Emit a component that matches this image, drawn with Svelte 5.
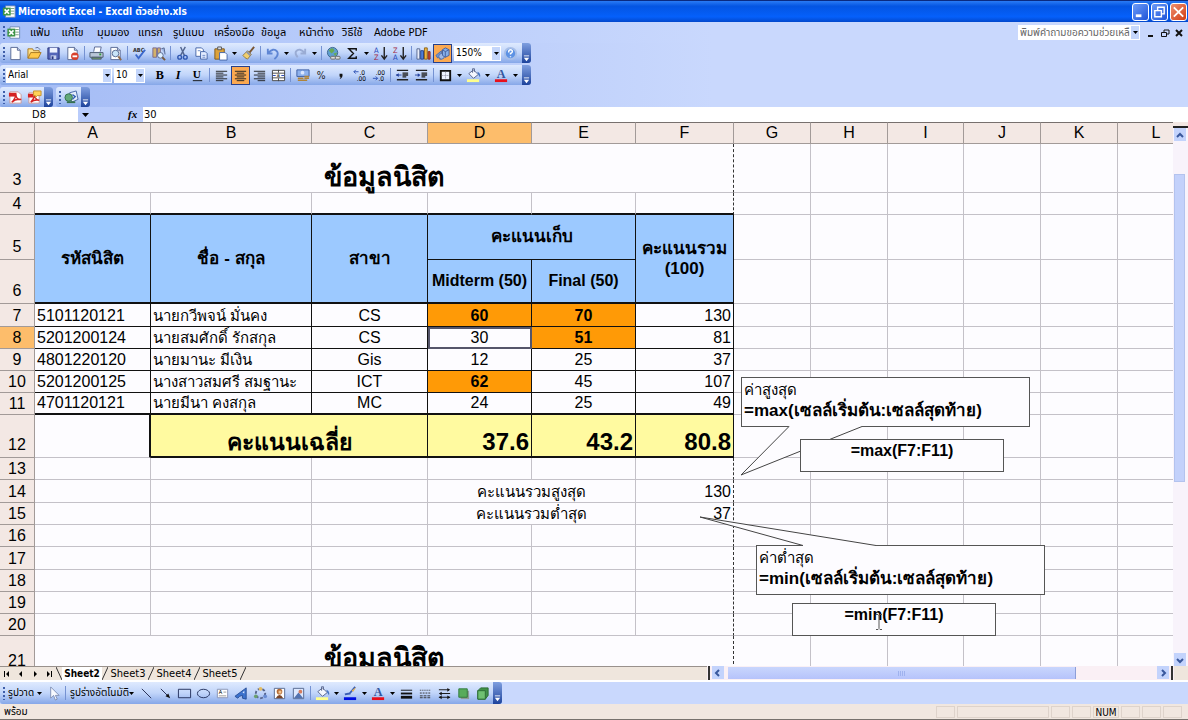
<script>
	let zoom = '150%';
	let font = 'Arial';
	let size = '10';
	let formula = '30';
	let question = '';
	let active = 'Sheet2';

	const menus = [
		['แฟ้ม', 18], ['แก้ไข', 23], ['มุมมอง', 28], ['แทรก', 22], ['รูปแบบ', 28],
		['เครื่องมือ', 34], ['ข้อมูล', 25], ['หน้าต่าง', 30], ['วิธีใช้', 19], ['Adobe PDF', 46]
	];
	const sheets = ['Sheet2', 'Sheet3', 'Sheet4', 'Sheet5'];

	// '|' is a separator, 'v' a drop arrow, everything else an icon name
	const standard1 = ['new', 'open', 'save', 'perm', '|', 'print', 'preview', '|', 'spell', 'research', '|', 'cut', 'copy', 'paste', 'v', 'brush', '|', 'undo', 'v', 'redo', 'v', '|', 'link', 'sum', 'v', 'az', 'za', '|', 'chart', 'drawing'];
	const format = ['bold', 'italic', 'underline', '|', 'left', 'center', 'right', 'merge', '|', 'money', 'percent', 'comma', 'incdec', 'decdec', '|', 'outdent', 'indent', '|', 'border', 'v', 'fill', 'v', 'fontcolor', 'v'];
	const draw = ['line', 'arrow', 'rect', 'oval', 'textbox', 'wordart', 'diagram', 'clip', 'picture', '|', 'fill', 'v', 'linecolor', 'v', 'fontcolor', 'v', 'weights', 'dashes', 'arrows', 'shadow', 'cube'];
	const pressed = ['drawing', 'center'];

	const page = '<path d="M3 1.5h7l3 3v10H3z" fill="#fff" stroke="#5a6a94"/><path d="M10 1.5v3h3" fill="#cfdcf5" stroke="#5a6a94"/>';
	const bucket = '<path d="M3 7l5-4 5 5-5 4z" fill="#f4f7ff" stroke="#56648c"/><path d="M7 6V2q1-2 2 0v3" fill="none" stroke="#56648c"/><path d="M12 5q4 1 3 6l-2-3z" fill="#4474c4"/>';
	const icons = {
		new: page,
		open: '<path d="M1 13V3h5l1 2h6v3" fill="#ffe08a" stroke="#a87820"/><path d="M1 13l3-6h11l-3 6z" fill="#ffc84a" stroke="#a87820"/><path d="M9 2q3-2 5 2" fill="none" stroke="#5a6a94"/>',
		save: '<path d="M2 2h12v12H2z" fill="#5566b8" stroke="#27357e"/><path d="M4 2h8v5H4z" fill="#eef2ff"/><path d="M5 10h6v4H5z" fill="#c9d2ee"/><path d="M6 11h2v3H6z" fill="#27357e"/>',
		perm: page + '<circle cx="10.500" cy="11" r="4" fill="#d8402c"/><path d="M8 11h5" stroke="#fff" stroke-width="2"/>',
		print: '<path d="M5 6l1-5h7l-1 5" fill="#fff" stroke="#5a6a94"/><path d="M1 7h14v5H1z" fill="#b9c6d8" stroke="#4c5c70"/><path d="M3 12h10v2H3z" fill="#6e9a62" stroke="#4c5c70"/><path d="M11 9h2" stroke="#2f9a38" stroke-width="2"/>',
		preview: page + '<circle cx="8" cy="8" r="3.500" fill="#c8e4f8" stroke="#55688f"/><path d="M11 11l3 4" stroke="#8f6a4b" stroke-width="2"/>',
		spell: '<text x="1" y="6" font-size="6" font-weight="bold" fill="#333">ABC</text><path d="M4 9l3 4 7-9" fill="none" stroke="#3b68cc" stroke-width="2"/>',
		research: '<path d="M2 2h4v10H2zM7 2h3v8H7z" fill="#d4b26a" stroke="#7b6a8c"/><path d="M11 3l3-1 1 7" fill="#9db4e4" stroke="#55688f"/><circle cx="10" cy="10" r="3" fill="#dff0ff" stroke="#55688f"/><path d="M12 12l3 3" stroke="#7a5a3b" stroke-width="2"/>',
		cut: '<path d="M6 1l4 9M11 1L6 10" stroke="#52658f" stroke-width="1.500"/><circle cx="5" cy="12" r="2" fill="none" stroke="#2f57b0" stroke-width="1.500"/><circle cx="11" cy="12" r="2" fill="none" stroke="#2f57b0" stroke-width="1.500"/>',
		copy: '<path d="M2 2h6l2 2v7H2z" fill="#fff" stroke="#4565a8"/><path d="M7 6h5l2 2v6H7z" fill="#e3ecff" stroke="#4565a8"/><path d="M4 5h3M9 10h3M9 12h3" stroke="#6f8cc8"/>',
		paste: '<path d="M2 3h10v11H2z" fill="#dda23a" stroke="#7d5a1d"/><path d="M5 1h4v3H5z" fill="#d7dbe4" stroke="#555"/><path d="M7 7h6l2 2v6H7z" fill="#fff" stroke="#4565a8"/>',
		brush: '<path d="M14 1L9 7" stroke="#7a5530" stroke-width="2"/><path d="M7 5l4 4-4 5q-3-1-5-4z" fill="#f2cf6b" stroke="#8c7a50"/><path d="M6 6l4 4" stroke="#8c93a8" stroke-width="2"/>',
		undo: '<path d="M3 3v5h5M3 8q6-7 10-2 2 4-3 8" fill="none" stroke="#5f86d4" stroke-width="2"/>',
		redo: '<path d="M13 3v5H8M13 8Q7 1 3 6q-1 3 2 6" fill="none" stroke="#9aacd4" stroke-width="2"/>',
		link: '<circle cx="7" cy="7" r="5.500" fill="#5f9fd0" stroke="#3b6590"/><path d="M3 5q4-5 6 0l-3 3zM8 8l4-1-2 4z" fill="#67aa55"/><rect x="5" y="11" width="5" height="3" rx="1" fill="#ddd" stroke="#666"/><rect x="10" y="11" width="5" height="3" rx="1" fill="#ddd" stroke="#666"/>',
		sum: '<path d="M12 5V3H4l5 5-5 5h8v-2" fill="none" stroke="#111" stroke-width="1.500"/>',
		az: '<text x="1" y="7" font-size="8" fill="#2545b8">A</text><text x="1" y="15" font-size="8" fill="#a32942">Z</text><path d="M12 1v12M9 10l3 4 3-4" fill="none" stroke="#222" stroke-width="1.500"/>',
		za: '<text x="1" y="7" font-size="8" fill="#a32942">Z</text><text x="1" y="15" font-size="8" fill="#2545b8">A</text><path d="M12 1v12M9 10l3 4 3-4" fill="none" stroke="#222" stroke-width="1.500"/>',
		chart: '<path d="M1 3h3v11H1z" fill="#e9eefb" stroke="#55688f"/><path d="M5 5h3v9H5z" fill="#4d7fd8" stroke="#27458a"/><path d="M9 2h3v12H9z" fill="#f0b43c" stroke="#8d6419"/><path d="M13 6h2v8h-2z" fill="#d84d32" stroke="#8c2c1c"/>',
		drawing: '<path d="M1 10l6-5v9H5v-2H3v1z" fill="#6f94d8" stroke="#5470a8"/><circle cx="7" cy="11" r="3" fill="#9fb8e6" stroke="#5470a8"/><path d="M8 4l3-2 4 2v6l-4 2-3-2z" fill="#86aee8" stroke="#4461a0"/><path d="M8 4l3 2 4-2M11 6v6" stroke="#4461a0" fill="none"/>',
		help: '<circle cx="8" cy="8" r="6" fill="#5d92e4" stroke="#a8bfe8" stroke-width="2"/><path d="M6 7q0-3 2-3t2 2q0 1-2 2v1M8 11v1" fill="none" stroke="#fff" stroke-width="1.500"/>',
		bold: '<text x="4" y="12" font-family="Liberation Serif" font-size="13" font-weight="bold">B</text>',
		italic: '<text x="5" y="12" font-family="Liberation Serif" font-size="13" font-weight="bold" font-style="italic">I</text>',
		underline: '<text x="3" y="11" font-family="Liberation Serif" font-size="12" font-weight="bold">U</text><path d="M3 13.500h10" stroke="#111"/>',
		left: '<path d="M2 3.500h12M2 5.500h8M2 7.500h12M2 9.500h8M2 11.500h12M2 13.500h8" stroke="#222"/>',
		center: '<path d="M2 3.500h12M4 5.500h8M2 7.500h12M4 9.500h8M2 11.500h12M4 13.500h8" stroke="#222"/>',
		right: '<path d="M2 3.500h12M6 5.500h8M2 7.500h12M6 9.500h8M2 11.500h12M6 13.500h8" stroke="#222"/>',
		merge: '<path d="M1.500 2.500h13v11h-13z" fill="#fff" stroke="#444"/><path d="M1 5.500h14M1 10.500h14M8 2v3M8 11v3" stroke="#444"/><path d="M2 8h3M11 8h3" stroke="#2545b8"/><text x="6" y="10" font-size="6">a</text>',
		money: '<path d="M2 2h13v7H2z" fill="#8eb2ee" stroke="#3d5fa5"/><circle cx="8" cy="5" r="2" fill="#dbe7ff"/><path d="M3 11h6M3 13h6M10 9h5M10 11h5M9 13h4" stroke="#b0843a" stroke-width="1.500"/>',
		percent: '<text x="3" y="12" font-size="11" fill="#222">%</text>',
		comma: '<path d="M7 6h3q1 4-3 6 2-3 0-3z" fill="#111"/>',
		incdec: '<text x="8" y="7" font-size="7">.0</text><text x="5" y="14" font-size="7">.00</text><path d="M2 4h5M4 2L2 4l2 2" fill="none" stroke="#2c50b4"/>',
		decdec: '<text x="5" y="7" font-size="7">.00</text><text x="8" y="14" font-size="7">.0</text><path d="M2 11h5M5 9l2 2-2 2" fill="none" stroke="#2c50b4"/>',
		outdent: '<path d="M2 2.500h12M8 5.500h6M8 7.500h6M8 9.500h4M2 12.500h12" stroke="#222" stroke-width="1.500"/><path d="M1 7.500h6" stroke="#23409c"/><path d="M1 7.500l3-2v4z" fill="#23409c"/>',
		indent: '<path d="M2 2.500h12M8 5.500h6M8 7.500h6M8 9.500h4M2 12.500h12" stroke="#222" stroke-width="1.500"/><path d="M1 7.500h4" stroke="#23409c"/><path d="M7 7.500l-3-2v4z" fill="#23409c"/>',
		border: '<path d="M3 3h10v10H3z" fill="#eef3ff" stroke="#111" stroke-width="2"/><path d="M8 4v8M4 8h8" stroke="#889" stroke-dasharray="1 1"/>',
		fill: '<g transform="translate(0 -1)">' + bucket + '</g><path d="M1 12h13v3H1z" fill="#ffff8c"/>',
		linecolor: '<path d="M13 1L7 8M2 9q4-1 6-1" fill="none" stroke="#3a5eb4" stroke-width="2"/><path d="M14 1L9 5l2 1z" fill="#eab24d"/><path d="M1 12h13v3H1z" fill="#0010e0"/>',
		fontcolor: '<text x="3" y="11" font-family="Liberation Serif" font-size="13" font-weight="bold" fill="#3356a0">A</text><path d="M1 12h13v3H1z" fill="#e8101c"/>',
		pdf: '<path d="M2 2h9l3 3v9H2z" fill="#fff" stroke="#c99"/><path d="M1 3h8v4H1z" fill="#d52222"/><path d="M4 13q5-5 4-9 1 7 6 6-6-1-10 3" fill="none" stroke="#d52222" stroke-width="1.500"/>',
		pdfmail: '<path d="M2 3h9l2 3v8H2z" fill="#fff" stroke="#c99"/><path d="M1 4h6v4H1z" fill="#d52222"/><path d="M4 13q4-4 4-8 1 6 5 6-5-1-9 2" fill="none" stroke="#d52222" stroke-width="1.500"/><path d="M7 1h8v5h-4l-2 2V6H7z" fill="#ffd257" stroke="#c8912c"/>',
		review: '<path d="M6 3l7-2 2 9-7 3z" fill="#e6eefc" stroke="#4668a8"/><circle cx="5" cy="8" r="4" fill="#62a97a" stroke="#34704f"/><path d="M3 13h9" stroke="#34704f" stroke-width="2"/><path d="M9 5l3 2-3 3" fill="none" stroke="#3462b4" stroke-width="1.500"/>',
		select: '<path d="M5 1v12l3-3 2 5 2-1-2-4h4z" fill="#f8faff" stroke="#7f8fb4"/>',
		line: '<path d="M3 3l10 10" stroke="#222a50"/>',
		arrow: '<path d="M3 3l7 7" stroke="#222a50"/><path d="M13 13l-5-2 3-3z" fill="#111"/>',
		rect: '<path d="M1.500 3.500h13v9h-13z" fill="none" stroke="#22305c"/>',
		oval: '<ellipse cx="8" cy="8" rx="6.500" ry="4.500" fill="none" stroke="#22305c"/>',
		textbox: '<path d="M2.500 3.500h11v9h-11z" fill="#fff" stroke="#8893b4"/><text x="4" y="9" font-size="6">A</text><path d="M9 6.500h3M4 10.500h8" stroke="#999"/>',
		wordart: '<path d="M1 11L13 2v12l-4-1v-3l-3 1-2 2z" fill="#3b72ce" stroke="#2a5098"/><path d="M9 7l2-2v3z" fill="#dce8ff"/>',
		diagram: '<circle cx="8" cy="8" r="5" fill="none" stroke="#56648c" stroke-width="2" stroke-dasharray="3 2"/><circle cx="8" cy="3" r="2" fill="#e4bd62"/><circle cx="3" cy="11" r="2" fill="#6ba06e"/><circle cx="13" cy="11" r="2" fill="#6a8dd4"/>',
		clip: '<path d="M2.500 2.500h11v11h-11z" fill="#fff" stroke="#55688f"/><circle cx="8" cy="6" r="3" fill="#b46a35"/><path d="M4 13q4-7 8 0z" fill="#7a4528"/><path d="M7 5h3v3H7z" fill="#f1c490"/>',
		picture: '<path d="M2.500 2.500h11v11h-11z" fill="#dce8ff" stroke="#55688f"/><path d="M3 13l5-6 5 6z" fill="#5373b0"/><circle cx="10" cy="6" r="2" fill="#d67b5c"/>',
		weights: '<path d="M2 4.500h12" stroke="#111"/><path d="M2 8h12" stroke="#111" stroke-width="2"/><path d="M2 12h12" stroke="#111" stroke-width="3"/>',
		dashes: '<path d="M2 4.500h12" stroke="#333" stroke-dasharray="1 1"/><path d="M2 7.500h12" stroke="#333" stroke-dasharray="2 1"/><path d="M2 10.500h12M2 12.500h12" stroke="#333" stroke-dasharray="3 1"/>',
		arrows: '<path d="M2 4h10M4 8h10M2 12h12" stroke="#111"/><path d="M11 2l3 2-3 2zM5 6L2 8l3 2zM11 10l3 2-3 2zM5 10l-3 2 3 2z" fill="#111"/>',
		shadow: '<path d="M5 5h9v9H5z" fill="#8e9a94"/><path d="M3 3h9v9H3z" fill="#58ab5b" stroke="#2f7a3b"/>',
		cube: '<path d="M3 5l3-3h8v8l-3 4H3z" fill="#3f9048" stroke="#2c6c35"/><path d="M3 5h8v9H3z" fill="#6fc072" stroke="#2c6c35"/>'
	};

	const cols = [
		['A', 116], ['B', 161], ['C', 116], ['D', 104], ['E', 104], ['F', 98], ['G', 77],
		['H', 77], ['I', 76], ['J', 77], ['K', 77], ['L', 77]
	];
	const blanks = (n, c = '') => Array.from({ length: n }, () => ({ c }));

	function student(n, h, id, name, dept, mid, fin, total, hot = [], extra = '') {
		return {
			n, h,
			cells: [
				{ t: id, c: 'k ' + extra }, { t: name, c: 'k thai ' + extra }, { t: dept, c: 'k mid ' + extra },
				{ t: mid, c: 'k mid ' + (hot[0] ? 'hot ' : '') + (n === 8 ? 'cursor ' : '') + extra },
				{ t: fin, c: 'k mid ' + (hot[1] ? 'hot ' : '') + extra },
				{ t: total, c: 'k num dash ' + extra }
			]
		};
	}
	function empty(n, h) {
		return { n, h, cells: [...blanks(5), { c: 'dash' }] };
	}
	function result(n, h, t, v) {
		return { n, h, cells: [...blanks(3), { t, span: 2, c: 'mid thai' }, { t: v, c: 'num dash' }] };
	}

	const rows = [
		{ n: 3, h: 49, cells: [{ t: 'ข้อมูลนิสิต', span: 6, c: 'title dash' }] },
		{ n: 4, h: 22, cells: [...blanks(5, 'thick'), { c: 'thick dash' }] },
		{
			n: 5, h: 45,
			cells: [
				{ t: 'รหัสนิสิต', rows: 2, c: 'k head thick' }, { t: 'ชื่อ - สกุล', rows: 2, c: 'k head thick' },
				{ t: 'สาขา', rows: 2, c: 'k head thick' }, { t: 'คะแนนเก็บ', span: 2, c: 'k head' },
				{ t: 'คะแนนรวม (100)', rows: 2, c: 'k head thick dash' }
			]
		},
		{ n: 6, h: 44, cells: [{ t: 'Midterm (50)', c: 'k head latin thick' }, { t: 'Final (50)', c: 'k head latin thick' }] },
		student(7, 23, '5101120121', 'นายกวีพจน์ มั่นคง', 'CS', 60, 70, 130, [1, 1]),
		student(8, 22, '5201200124', 'นายสมศักดิ์ รักสกุล', 'CS', 30, 51, 81, [0, 1]),
		student(9, 22, '4801220120', 'นายมานะ มีเงิน', 'Gis', 12, 25, 37),
		student(10, 22, '5201200125', 'นางสาวสมศรี สมฐานะ', 'ICT', 62, 45, 107, [1, 0]),
		student(11, 22, '4701120121', 'นายมีนา คงสกุล', 'MC', 24, 25, 49, [], 'thick'),
		{
			n: 12, h: 43,
			cells: [
				{ c: 'edge' }, { t: 'คะแนนเฉลี่ย', span: 2, c: 'k avg mid thick' },
				{ t: '37.6', c: 'k avg num thick' }, { t: '43.2', c: 'k avg num thick' }, { t: '80.8', c: 'k avg num thick dash' }
			]
		},
		empty(13, 22),
		result(14, 23, 'คะแนนรวมสูงสุด', 130),
		result(15, 22, 'คะแนนรวมต่ำสุด', 37),
		empty(16, 22), empty(17, 23), empty(18, 22), empty(19, 22), empty(20, 22),
		{ n: 21, h: 38, cells: [{ t: 'ข้อมูลนิสิต', span: 6, c: 'title dash' }] }
	];
</script>

{#snippet tools(list)}
	{#each list as name}
		{#if name === '|'}
			<i class="sep"></i>
		{:else if name === 'v'}
			<button class="drop" aria-label="more"><svg viewBox="0 0 5 3"><path d="M0 0h5L2.500 3z" /></svg></button>
		{:else}
			<button class="tool" class:pressed={pressed.includes(name)} aria-label={name}>
				<svg viewBox="0 0 16 16">{@html icons[name]}</svg>
			</button>
		{/if}
	{/each}
{/snippet}

{#snippet end()}
	<button class="end" aria-label="toolbar options">
		<svg viewBox="0 0 8 8"><path d="M1 1h6" stroke="#fff" /><path d="M1 3h6L4 7z" fill="#fff" /></svg>
	</button>
{/snippet}

{#snippet logo()}
	<svg class="logo" viewBox="0 0 16 16">
		<path d="M4 1h11v13H4z" fill="#fff" stroke="#6a86b0" />
		<path d="M10 4h4M10 7h4M10 10h4" stroke="#6c9a70" />
		<path d="M1 3h9v9H1z" fill="#3d9447" />
		<path d="M3 5l5 5M8 5l-5 5" stroke="#fff" stroke-width="2" />
	</svg>
{/snippet}

<div class="window">
	<header class="titlebar">
		{@render logo()}
		<h1>Microsoft Excel - Excdl ตัวอย่าง.xls</h1>
		<button class="win" aria-label="minimize"><svg viewBox="0 0 16 16"><path d="M3 12h6" stroke="#fff" stroke-width="3" /></svg></button>
		<button class="win" aria-label="restore"><svg viewBox="0 0 16 16"><path d="M6 6V3h7v7h-3M3 6.500h7V13H3z" fill="none" stroke="#fff" stroke-width="1.500" /></svg></button>
		<button class="win close" aria-label="close"><svg viewBox="0 0 16 16"><path d="M3 3l10 10M13 3L3 13" stroke="#fff" stroke-width="2" /></svg></button>
	</header>

	<nav class="menubar">
		<i class="grip"></i>
		{@render logo()}
		{#each menus as [label, width]}
			<button class="menu" style:width="{width}px">{label}</button>
		{/each}
		<label class="ask">
			<input bind:value={question} placeholder="พิมพ์คำถามขอความช่วยเหลือ" aria-label="พิมพ์คำถาม" />
			<span class="arrow"><svg viewBox="0 0 5 3"><path d="M0 0h5L2.500 3z" /></svg></span>
		</label>
		<button class="mdi" aria-label="minimize workbook"><svg viewBox="0 0 10 10"><path d="M2 8h5" stroke="#111" stroke-width="2" /></svg></button>
		<button class="mdi" aria-label="restore workbook"><svg viewBox="0 0 10 10"><path d="M4 4V2h5v4H7M1.500 4.500h5v4h-5z" fill="none" stroke="#111" /></svg></button>
		<button class="mdi" aria-label="close workbook"><svg viewBox="0 0 10 10"><path d="M2 2l6 6M8 2L2 8" stroke="#111" stroke-width="2" /></svg></button>
	</nav>

	<div class="dock">
		<div class="bar wide">
			<i class="grip"></i>
			{@render tools(standard1)}
			<label class="combo zoom">
				<select bind:value={zoom} aria-label="zoom"><option>150%</option><option>100%</option></select>
				<span class="arrow"><svg viewBox="0 0 5 3"><path d="M0 0h5L2.500 3z" /></svg></span>
			</label>
			{@render tools(['help'])}
			{@render end()}
		</div>
		<div class="bar wide">
			<i class="grip"></i>
			<label class="combo font">
				<select bind:value={font} aria-label="font"><option>Arial</option><option>Tahoma</option></select>
				<span class="arrow"><svg viewBox="0 0 5 3"><path d="M0 0h5L2.500 3z" /></svg></span>
			</label>
			<label class="combo size">
				<select bind:value={size} aria-label="font size"><option>10</option><option>12</option></select>
				<span class="arrow"><svg viewBox="0 0 5 3"><path d="M0 0h5L2.500 3z" /></svg></span>
			</label>
			{@render tools(format)}
			{@render end()}
		</div>
		<div class="pair">
			<div class="bar"><i class="grip"></i>{@render tools(['pdf', 'pdfmail'])}{@render end()}</div>
			<div class="bar"><i class="grip"></i>{@render tools(['review'])}{@render end()}</div>
		</div>
	</div>

	<div class="formula">
		<button class="name">D8</button>
		<span class="fdrop"><svg viewBox="0 0 7 4"><path d="M0 0h7L3.500 4z" /></svg></span>
		<em>fx</em>
		<input bind:value={formula} aria-label="formula" />
	</div>

	<main class="work">
		<div class="sheet">
			<table>
				<colgroup>
					<col style:width="35px" />
					{#each cols as [name, width]}<col style:width="{width}px" />{/each}
				</colgroup>
				<thead>
					<tr>
						<th class="corner"></th>
						{#each cols as [name]}<th class:on={name === 'D'}>{name}</th>{/each}
					</tr>
				</thead>
				<tbody>
					{#each rows as row}
						<tr style:height="{row.h}px">
							<th class:on={row.n === 8} class:tall={row.h > 30}>{row.n}</th>
							{#each row.cells as cell}
								<td class={cell.c} colspan={cell.span ?? 1} rowspan={cell.rows ?? 1}>{cell.t ?? ''}</td>
							{/each}
							{#each blanks(6) as cell}<td></td>{/each}
						</tr>
					{/each}
				</tbody>
			</table>

			<!-- callouts float on the drawing layer above the cells -->
			<div class="note big" style:left="741px" style:top="255px">
				<p>ค่าสูงสุด</p>
				<p><b>=max(เซลล์เริ่มต้น:เซลล์สุดท้าย)</b></p>
			</div>
			<div class="note big" style:left="756px" style:top="423px">
				<p>ค่าต่ำสุด</p>
				<p><b>=min(เซลล์เริ่มต้น:เซลล์สุดท้าย)</b></p>
			</div>
			<svg class="tails" viewBox="0 0 1188 540">
				<path class="gap" d="M789 304.500H862M803 423.500H876" />
				<path d="M789 304.500L741 353L862 304.500" />
				<path d="M803 423.500L700 395L876 423.500" />
			</svg>
			<div class="note small" style:left="800px" style:top="317px"><b>=max(F7:F11)</b></div>
			<div class="note small" style:left="792px" style:top="481px"><b>=min(F7:F11)</b></div>
			<svg class="ibeam" viewBox="0 0 8 16"><path d="M1 .5h2l1 1 1-1h2M4 1v13M1 15.500h2l1-1 1 1h2" /></svg>
		</div>
		<div class="vscroll">
			<i class="split"></i>
			<button aria-label="scroll up"><svg viewBox="0 0 10 10"><path d="M2 7l3-3 3 3" /></svg></button>
			<div class="track"><i class="thumb"></i></div>
			<button aria-label="scroll down"><svg viewBox="0 0 10 10"><path d="M2 4l3 3 3-3" /></svg></button>
		</div>
	</main>

	<div class="tabs">
		<div class="left">
			<button class="nav" aria-label="first"><svg viewBox="0 0 8 8"><path d="M1 1v6h1V1zM6 1v6L3 4z" /></svg></button>
			<button class="nav" aria-label="previous"><svg viewBox="0 0 8 8"><path d="M5 1v6L2 4z" /></svg></button>
			<button class="nav" aria-label="next"><svg viewBox="0 0 8 8"><path d="M3 1v6l3-3z" /></svg></button>
			<button class="nav" aria-label="last"><svg viewBox="0 0 8 8"><path d="M2 1v6l3-3zM6 1v6h1V1z" /></svg></button>
			<svg class="slash" viewBox="0 0 6 13"><path d="M0 0l6 13" /></svg>
			{#each sheets as name}
				<button class="tab" class:active={active === name} on:click={() => (active = name)}>{name}</button>
				<svg class="slash" viewBox="0 0 6 13"><path d="M6 0L0 13" /></svg>
			{/each}
		</div>
		<div class="hscroll">
			<i class="vsplit"></i>
			<button aria-label="scroll left"><svg viewBox="0 0 10 10"><path d="M6 2L3 5l3 3" /></svg></button>
			<div class="track"><i class="thumb"></i></div>
			<button aria-label="scroll right"><svg viewBox="0 0 10 10"><path d="M4 2l3 3-3 3" /></svg></button>
			<i class="vsplit"></i>
		</div>
	</div>

	<div class="drawdock">
		<div class="bar">
			<i class="grip"></i>
			<button class="word w1">รูปวาด <svg viewBox="0 0 5 3"><path d="M0 0h5L2.500 3z" /></svg></button>
			{@render tools(['select', '|'])}
			<button class="word w2">รูปร่างอัตโนมัติ <svg viewBox="0 0 5 3"><path d="M0 0h5L2.500 3z" /></svg></button>
			{@render tools(draw)}
			{@render end()}
		</div>
	</div>

	<footer class="status">
		<span class="ready">พร้อม</span>
		<span class="box b1"></span>
		<span class="box b2"></span>
		<span class="box b1"></span>
		<span class="box b1"></span>
		<span class="box caps">NUM</span>
		<span class="box b1"></span>
		<span class="box b1"></span>
		<span class="box b1"></span>
	</footer>
</div>

<style>
	:global(body) {
		margin: 0;
	}
	.window {
		display: flex;
		flex-direction: column;
		height: 100vh;
		overflow: hidden;
		background: #c9d8fd;
		color: #000;
		font: 11px/14px 'DejaVu Sans Condensed', 'Noto Sans', 'Noto Sans Thai', sans-serif;
	}
	.window :is(button, input, select) {
		box-sizing: border-box;
		margin: 0;
		padding: 0;
		border: 0;
		border-radius: 0;
		background: none;
		color: inherit;
		font: inherit;
	}
	svg {
		display: block;
		flex: none;
	}
	i {
		font-style: normal;
	}

	.titlebar {
		display: flex;
		align-items: center;
		flex: none;
		gap: 2px;
		height: 22px;
		padding: 0 1px 0 2px;
		box-sizing: border-box;
		border-top: 1px solid #0a2a80;
		background: linear-gradient(#2a7bf5, #0455e2 25%, #0560fb 75%, #0348cc);
		color: #fff;
	}
	.titlebar h1 {
		flex: 1;
		margin: 0;
		font-size: 10px;
		font-weight: bold;
	}
	.logo {
		width: 14px;
		height: 14px;
	}
	.win {
		width: 17px;
		height: 18px;
		border: 1px solid #fff !important;
		border-radius: 3px !important;
		background: linear-gradient(135deg, #6c9bf8, #1f55d8) !important;
	}
	.win svg {
		width: 15px;
		height: 16px;
	}
	.win.close {
		background: linear-gradient(135deg, #f09070, #d03c14) !important;
	}

	.menubar {
		display: flex;
		align-items: center;
		flex: none;
		height: 21px;
		padding: 0 2px;
		background: linear-gradient(90deg, #a8c0f8, #c9d8fd 60%);
	}
	.menubar .logo {
		margin-right: 9px;
		width: 15px;
	}
	.menu {
		flex: none;
		margin-right: 13px !important;
		white-space: nowrap;
	}
	.ask {
		display: flex;
		width: 122px;
		height: 15px;
		margin-left: auto;
		margin-right: 4px;
		background: #fff;
	}
	.ask input {
		flex: 1;
		min-width: 0;
		padding-left: 2px;
		font-size: 10px;
	}
	.ask input::placeholder {
		color: #666;
	}
	.mdi {
		width: 14px;
		height: 14px;
	}
	.mdi svg {
		width: 10px;
		height: 10px;
		margin: auto;
	}

	.dock {
		flex: none;
		height: 64px;
		background: linear-gradient(90deg, #a3bbf5, #c9d8fd 60%);
	}
	.bar {
		display: flex;
		align-items: center;
		height: 20px;
		margin-bottom: 2px;
		padding-left: 2px;
		box-sizing: border-box;
		border-radius: 3px;
		background: linear-gradient(#dfeafe, #c1d5fa 50%, #86a7e8);
		width: max-content;
	}
	.bar.wide {
		width: 531px;
	}
	.pair {
		display: flex;
		gap: 3px;
	}
	.grip {
		flex: none;
		width: 2px;
		height: 13px;
		margin: 0 1px;
		background: repeating-linear-gradient(#3e5eaa 0 2px, transparent 2px 4px);
	}
	.tool {
		flex: none;
		display: grid;
		place-items: center;
		width: 19px;
		height: 19px;
	}
	.tool svg {
		width: 15px;
		height: 15px;
	}
	.tool.pressed {
		border: 1px solid #26408c !important;
		background: #fba951 !important;
	}
	.drop {
		flex: none;
		width: 9px;
		height: 19px;
	}
	.drop svg,
	.word svg,
	.arrow svg {
		width: 5px;
		height: 3px;
		margin: auto;
	}
	.sep {
		flex: none;
		width: 1px;
		height: 14px;
		margin: 0 2px;
		background: #7592d2;
	}
	.end {
		flex: none;
		width: 9px;
		height: 20px;
		margin-left: auto !important;
		border-radius: 0 3px 3px 0 !important;
		background: linear-gradient(#7f9fe0, #1d439c) !important;
	}
	.end svg {
		width: 7px;
		height: 7px;
		margin: 10px auto 0;
	}
	.combo {
		display: flex;
		flex: none;
		height: 15px;
		background: #fff;
	}
	.combo select {
		flex: 1;
		min-width: 0;
		padding-left: 2px;
		appearance: none;
		font-size: 10px;
	}
	.arrow {
		display: flex;
		flex: none;
		width: 8px;
		margin: 1px;
		background: #c4d6fb;
	}
	.zoom {
		width: 47px;
		margin-left: 2px;
	}
	.font {
		width: 106px;
		margin-right: 2px;
	}
	.size {
		width: 31px;
		margin-right: 5px;
	}

	.formula {
		display: flex;
		align-items: center;
		flex: none;
		height: 15px;
		background: #fff;
	}
	.name {
		width: 78px;
		height: 15px;
	}
	.fdrop {
		display: flex;
		align-items: center;
		width: 50px;
		height: 15px;
		padding-left: 4px;
		box-sizing: border-box;
		background: #b9ccfb;
	}
	.fdrop svg {
		width: 7px;
		height: 4px;
	}
	.formula em {
		width: 15px;
		height: 15px;
		background: #b9ccfb;
		font: italic bold 11px/14px 'Liberation Serif', serif;
	}
	.formula input {
		flex: 1;
		padding-left: 1px;
	}

	.work {
		display: flex;
		flex: 1;
		min-height: 0;
		background: #fdfcff;
	}
	.sheet {
		position: relative;
		flex: 1;
		min-width: 0;
		overflow: hidden;
		font: 16px/20px 'Liberation Sans', Arial, sans-serif;
	}
	table {
		width: 1195px;
		table-layout: fixed;
		border-collapse: separate;
		border-spacing: 0;
	}
	th,
	td {
		box-sizing: border-box;
		padding: 0 2px;
		border: solid #c4c1c8;
		border-width: 0 1px 1px 0;
		vertical-align: bottom;
		white-space: nowrap;
	}
	th {
		padding: 0;
		border-color: #a29a98;
		background: #f3e8e4;
		font-weight: normal;
	}
	thead th {
		height: 22px;
		border-top: 1px solid #77706e;
		vertical-align: middle;
	}
	th.on {
		background: #fdbd6b;
	}
	th.tall {
		padding-bottom: 2px;
	}
	.thai {
		font-size: 15px;
	}
	.mid {
		text-align: center;
	}
	.num {
		text-align: right;
	}
	.dash {
		border-right: 1px dashed #333;
	}
	.k {
		border-color: #111;
		border-right-style: solid;
	}
	.edge {
		border-right: 2px solid #111;
	}
	.thick {
		border-bottom: 2px solid #111;
	}
	.head {
		padding: 0;
		background: #9cc9ff;
		font-size: 17px;
		font-weight: bold;
		text-align: center;
		vertical-align: middle;
		white-space: normal;
	}
	.head.latin {
		font-size: 16px;
	}
	.hot {
		background: #ff9a06;
		font-weight: bold;
	}
	.cursor {
		outline: 2px solid #55556a;
		outline-offset: -2px;
	}
	.avg {
		padding-bottom: 2px;
		background: #fffaa0;
		font-size: 23px;
		line-height: 24px;
		font-weight: bold;
	}
	.avg.num {
		font-size: 24px;
	}
	.title {
		font-size: 27px;
		line-height: 30px;
		font-weight: bold;
		text-align: center;
	}
	.note {
		position: absolute;
		box-sizing: border-box;
		border: 1px solid #555;
		background: #fdfcff;
		white-space: nowrap;
	}
	.note p {
		margin: 0;
		font-size: 15px;
		line-height: 21px;
	}
	.note p b {
		font-size: 17px;
	}
	.big {
		width: 289px;
		height: 50px;
		padding: 1px 2px;
	}
	.small {
		width: 204px;
		height: 33px;
		padding-top: 1px;
		text-align: center;
	}
	.tails {
		position: absolute;
		top: 0;
		left: 0;
		width: 1188px;
		height: 540px;
		pointer-events: none;
	}
	.tails path {
		fill: #fdfcff;
		stroke: #444;
	}
	.tails .gap {
		stroke: #fdfcff;
	}
	.ibeam {
		position: absolute;
		left: 875px;
		top: 492px;
		width: 8px;
		height: 16px;
		fill: none;
		stroke: #555;
	}

	.vscroll {
		display: flex;
		flex-direction: column;
		flex: none;
		width: 15px;
		background: #f8f3fb;
	}
	.split {
		height: 6px;
		border-bottom: 2px solid #222;
		background: #f3e8e4;
		box-sizing: border-box;
	}
	.vscroll button,
	.hscroll button {
		flex: none;
		width: 12px;
		height: 13px;
		margin: 0 1px;
		background: #c3d3fc;
	}
	.vscroll button svg,
	.hscroll button svg {
		width: 10px;
		height: 10px;
		margin: auto;
		fill: none;
		stroke: #39579c;
		stroke-width: 2;
	}
	.track {
		display: flex;
		flex: 1;
	}
	.vscroll .track {
		padding: 33px 2px 0 1px;
	}
	.vscroll .thumb {
		width: 11px;
		height: 308px;
		border: 1px solid #b3c3ee;
		box-sizing: border-box;
		background: #c3d1fb;
	}

	.tabs {
		display: flex;
		flex: none;
		height: 14px;
		border-bottom: 2px solid #fff;
		background: #efe6dd;
	}
	.left {
		display: flex;
		width: 59.5%;
		border-top: 1px solid #99918c;
		box-sizing: border-box;
	}
	.nav {
		width: 14px;
	}
	.nav svg {
		width: 8px;
		height: 8px;
		margin: auto;
	}
	.slash {
		width: 6px;
		height: 13px;
		stroke: #333;
	}
	.tab {
		width: 40px;
		text-align: center;
		white-space: nowrap;
		font-size: 11px;
		line-height: 12px !important;
	}
	.tab.active {
		font-weight: bold !important;
		font-size: 10px !important;
		background: #fff !important;
	}
	.hscroll {
		display: flex;
		flex: 1;
		margin-right: 14px;
		background: #faf0f5;
	}
	.vsplit {
		width: 2px;
		margin: 0 1px;
		background: #333;
	}
	.hscroll .track {
		padding: 1px 0 1px 3px;
	}
	.hscroll .thumb {
		width: 81%;
		background:
			repeating-linear-gradient(90deg, #9fb2ee 0 1px, transparent 1px 2px) center / 7px 5px no-repeat,
			linear-gradient(#c9d6fd, #b6c3fb);
		border-right: 1px solid #8d9ed8;
	}

	.drawdock {
		flex: none;
		height: 22px;
		background: #c9d8fd;
	}
	.drawdock .bar {
		height: 22px;
		margin: 0;
	}
	.drawdock .end {
		height: 22px;
		margin-left: 1px !important;
	}
	.word {
		display: flex;
		align-items: center;
		justify-content: space-between;
		flex: none;
		white-space: nowrap;
		font-size: 10px !important;
	}
	.word svg {
		margin: 0;
	}
	.w1 {
		width: 34px;
		margin: 0 2px !important;
	}
	.w2 {
		width: 64px;
		margin: 0 3px 0 2px !important;
	}

	.status {
		display: flex;
		align-items: center;
		flex: none;
		height: 16px;
		padding-right: 4px;
		box-sizing: border-box;
		border-bottom: 1px solid #77716c;
		background: #f1e7e0;
		font-size: 10px;
	}
	.ready {
		flex: 1;
		padding-left: 4px;
	}
	.box {
		width: 19px;
		height: 12px;
		margin-right: 2px;
		box-sizing: border-box;
		border: 1px solid #ded3cb;
		text-align: center;
		line-height: 11px;
	}
	.b2 {
		width: 92px;
	}
	.caps {
		width: 26px;
	}
</style>
